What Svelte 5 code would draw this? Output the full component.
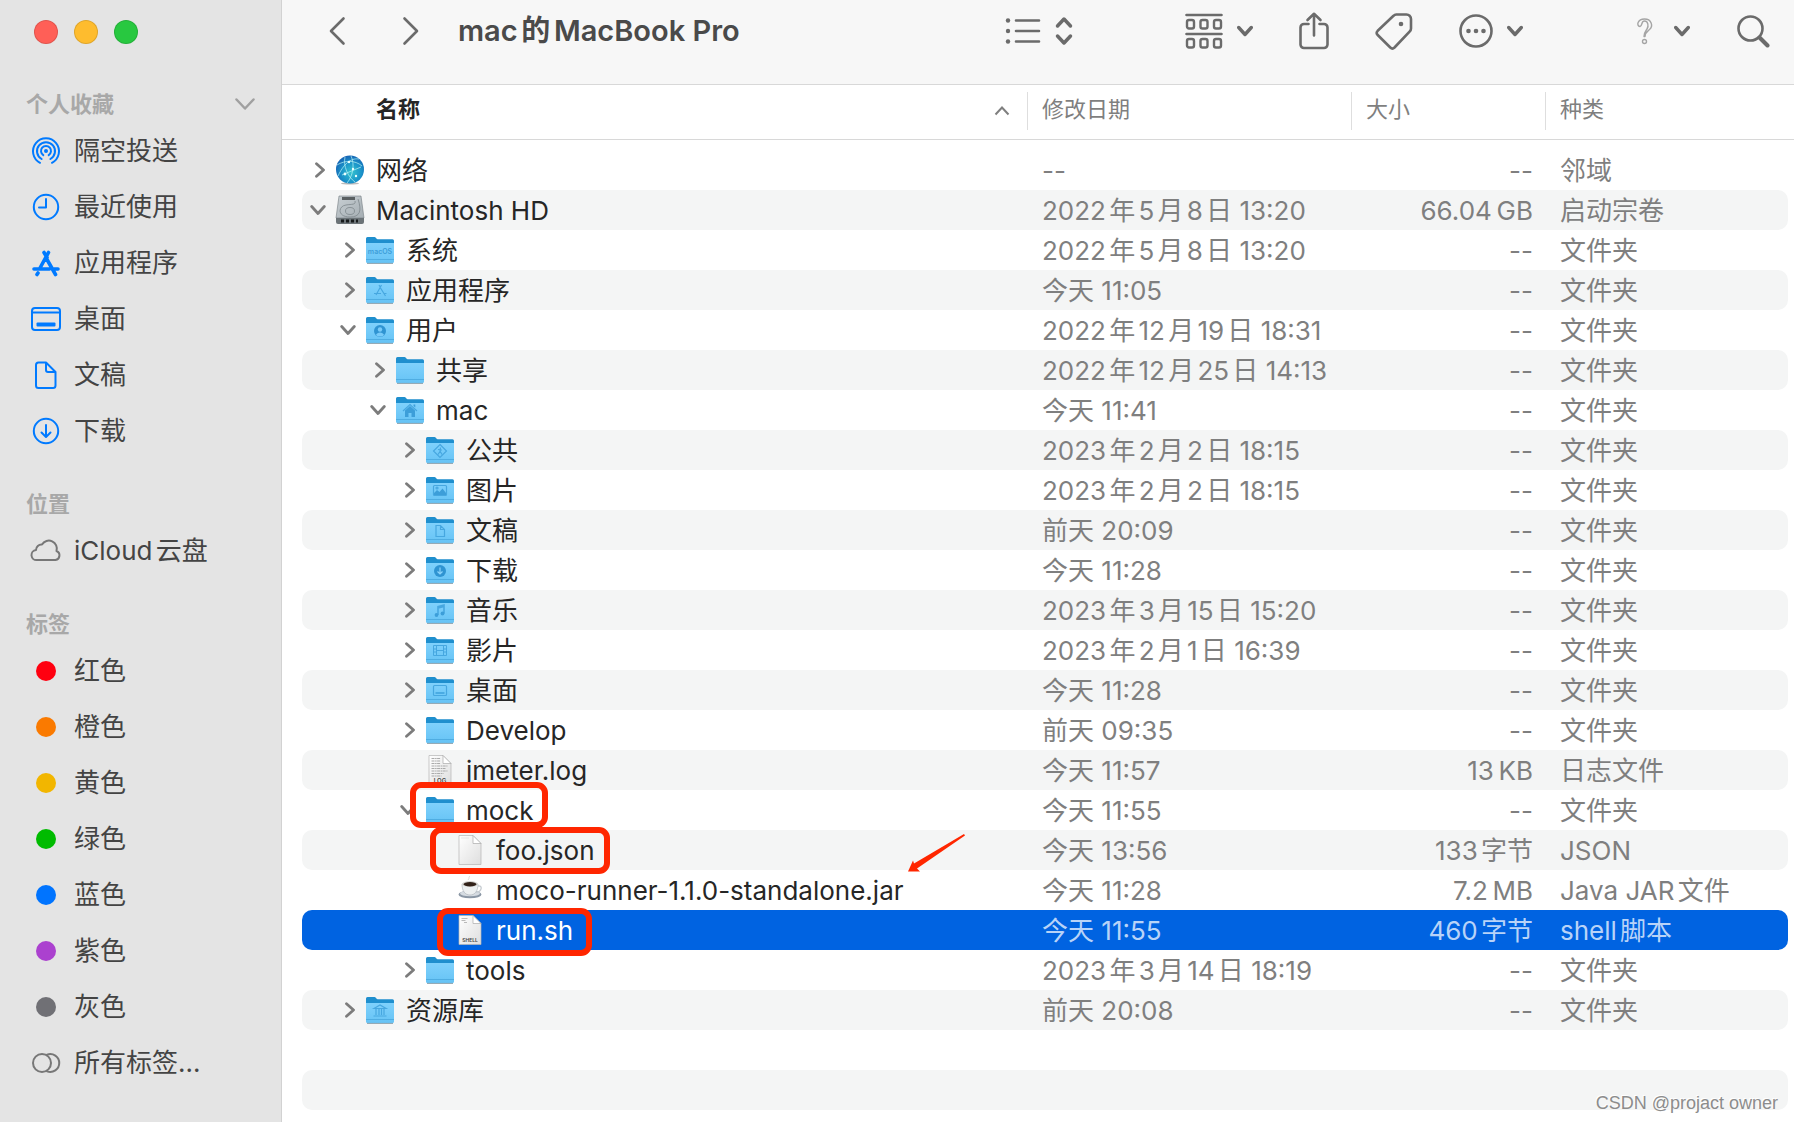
<script>
  const places = [
    { name: '隔空投送', icon: 'airdrop' },
    { name: '最近使用', icon: 'clock' },
    { name: '应用程序', icon: 'apps' },
    { name: '桌面', icon: 'desktop' },
    { name: '文稿', icon: 'doc' },
    { name: '下载', icon: 'download' },
  ];

  const tags = [
    { name: '红色', color: '#ff0010' },
    { name: '橙色', color: '#fa7a00' },
    { name: '黄色', color: '#f2b600' },
    { name: '绿色', color: '#00bb00' },
    { name: '蓝色', color: '#0074ff' },
    { name: '紫色', color: '#ab41cf' },
    { name: '灰色', color: '#707075' },
  ];

  const files = [
    { name: '网络', level: 0, icon: 'globe', date: '--', size: '--', kind: '邻域' },
    { name: 'Macintosh HD', level: 0, open: true, icon: 'disk', date: '2022年5月8日 13:20', size: '66.04\u2009GB', kind: '启动宗卷' },
    { name: '系统', level: 1, glyph: 'macos', date: '2022年5月8日 13:20' },
    { name: '应用程序', level: 1, glyph: 'apps', date: '今天 11:05' },
    { name: '用户', level: 1, open: true, glyph: 'user', date: '2022年12月19日 18:31' },
    { name: '共享', level: 2, date: '2022年12月25日 14:13' },
    { name: 'mac', level: 2, open: true, glyph: 'home', date: '今天 11:41' },
    { name: '公共', level: 3, glyph: 'public', date: '2023年2月2日 18:15' },
    { name: '图片', level: 3, glyph: 'picture', date: '2023年2月2日 18:15' },
    { name: '文稿', level: 3, glyph: 'doc', date: '前天 20:09' },
    { name: '下载', level: 3, glyph: 'download', date: '今天 11:28' },
    { name: '音乐', level: 3, glyph: 'music', date: '2023年3月15日 15:20' },
    { name: '影片', level: 3, glyph: 'movie', date: '2023年2月1日 16:39' },
    { name: '桌面', level: 3, glyph: 'desktop', date: '今天 11:28' },
    { name: 'Develop', level: 3, date: '前天 09:35' },
    { name: 'jmeter.log', level: 3, leaf: true, icon: 'log', date: '今天 11:57', size: '13\u2009KB', kind: '日志文件' },
    { name: 'mock', level: 3, open: true, date: '今天 11:55', mark: 'mark-mock' },
    { name: 'foo.json', level: 4, leaf: true, icon: 'file', date: '今天 13:56', size: '133字节', kind: 'JSON', mark: 'mark-foo' },
    { name: 'moco-runner-1.1.0-standalone.jar', level: 4, leaf: true, icon: 'jar', date: '今天 11:28', size: '7.2\u2009MB', kind: 'Java JAR文件', arrow: true },
    { name: 'run.sh', level: 4, leaf: true, icon: 'shell', date: '今天 11:55', size: '460字节', kind: 'shell脚本', mark: 'mark-run' },
    { name: 'tools', level: 3, date: '2023年3月14日 18:19' },
    { name: '资源库', level: 1, glyph: 'library', date: '前天 20:08' },
  ];

  let selected = $state('run.sh');
</script>

{#snippet chevron(dir)}
  <svg class="chevron {dir}" width="16" height="16" viewBox="0 0 16 16"><path d="M1.700 4.500L8 11.500l6.300-7" /></svg>
{/snippet}

{#snippet sideIcon(icon)}
  <svg class="side-icon" width="32" height="32" viewBox="0 0 32 32">
    {#if icon === 'airdrop'}
      <circle cx="16" cy="16" r="2" fill="currentColor" stroke="none" />
      <path d="M13.3 20.2a5 5 0 1 1 5.4 0M11.6 24a9 9 0 1 1 8.8 0M10 27.8a13 13 0 1 1 12 0" />
    {:else if icon === 'clock'}
      <circle cx="16" cy="16" r="12.2" />
      <path d="M16 8v8.6H9" />
    {:else if icon === 'apps'}
      <g stroke-width="3.6"><path d="M14 5.5l3 5M18.5 5.5L10 21M17 12.5l8.5 15M4 22h15.500M24 22h4M8 26l-1 1.5" /></g>
    {:else if icon === 'desktop'}
      <rect x="2" y="5" width="28" height="22" rx="3" />
      <path d="M2 9.600h28" />
      <rect x="6.500" y="19.500" width="19" height="4" rx="1" fill="currentColor" stroke="none" />
    {:else if icon === 'doc'}
      <path d="M8.500 3.500H16l9.500 9.500v13.500a2.500 2.500 0 0 1-2.500 2.500H8.500A2.500 2.500 0 0 1 6 26.500V6a2.500 2.500 0 0 1 2.500-2.500zM16 4v7a2 2 0 0 0 2 2h7" />
    {:else if icon === 'download'}
      <circle cx="16" cy="16" r="12.200" />
      <path d="M16 10v11.500M11.500 17.500l4.500 4.500 4.500-4.500" />
    {:else if icon === 'cloud'}
      <path d="M7 25a5 5 0 0 1-1-10 5.500 5.500 0 0 1 6-5.500 8 8 0 0 1 14.500 6.500A4.700 4.700 0 0 1 25.500 25z" />
    {:else if icon === 'tags'}
      <circle cx="12" cy="16" r="9" />
      <path d="M17 7.600a9 9 0 1 1 0 16.800" />
    {/if}
  </svg>
{/snippet}

{#snippet folder(glyph)}
  <svg class="file-icon" width="30" height="30" viewBox="0 0 30 30">
    <path d="M1 3.500A1.500 1.500 0 0 1 2.500 2h7c1.200 0 1.800 2.200 3 2.200h15A1.500 1.500 0 0 1 29 5.700V14H1z" fill="#1f8fce" />
    <path d="M1 8h28v18.500a1.500 1.500 0 0 1-1.500 1.500h-25A1.500 1.500 0 0 1 1 26.500z" fill="url(#folder-front)" />
    <path d="M1 24.500h28" stroke="#4fade2" stroke-width="1" />
    <path d="M2 28.400h26" stroke="#8aa2ae" stroke-width="1" />
    <g fill="none" stroke="#46a7e0" stroke-width="1.200">
      {#if glyph === 'macos'}
        <text x="15" y="18.500" class="tiny macos">macOS</text>
      {:else if glyph === 'apps'}
        <path d="M14 10l1.500 2.500M16.500 10L11 20M15.500 13l5 8M9 18.500h7M18.500 18.500h3" />
      {:else if glyph === 'user'}
        <circle cx="15" cy="16" r="6" fill="#2f94d2" stroke="none" />
        <circle cx="15" cy="14.500" r="2.200" fill="#79cbf9" stroke="none" />
        <path d="M11 20c1-3.500 7-3.500 8 0-2 2-6 2-8 0z" fill="#79cbf9" stroke="none" />
      {:else if glyph === 'home'}
        <path d="M8 16l7-6.500 7 6.500" />
        <path d="M10 15.500l5-4.500 5 4.500V22h-3.500v-4h-3v4H10zM18.500 9.500h1.800v3l-1.800-1.500z" fill="#3c9ed9" stroke="none" />
      {:else if glyph === 'public'}
        <path d="M15 9.500l6.500 6.500-6.500 6.500L8.500 16z" />
        <path d="M15.500 12.500l-.5 4-2 3M15 16l2 3.500M13 14.500l4 .5" />
      {:else if glyph === 'picture'}
        <rect x="8.500" y="10.500" width="13" height="10" rx="1" />
        <path d="M9 20v-2l3-3 2.500 2 3-3.500L21 18v2z" fill="#3c9ed9" stroke="none" />
        <circle cx="12" cy="13" r="1" />
      {:else if glyph === 'doc'}
        <path d="M11 10.500h4.500l4 4V21.500H11zM15.500 10.500v4h4" />
      {:else if glyph === 'download'}
        <circle cx="15" cy="16" r="6" fill="#2f94d2" stroke="none" />
        <path d="M15 12.500v6.500M12.500 16.500l2.500 2.500 2.500-2.500" stroke="#8bd3fb" />
      {:else if glyph === 'music'}
        <path d="M13 20v-8.500l6-1.500v8.500M13 13l6-1.500" stroke-width="1.600" />
        <circle cx="11.500" cy="20" r="1.900" fill="#3c9ed9" stroke="none" />
        <circle cx="17.500" cy="18.500" r="1.900" fill="#3c9ed9" stroke="none" />
      {:else if glyph === 'movie'}
        <path d="M8.500 10.500h13v10h-13zM11.500 10.500v10M18.500 10.500v10M11.500 15.500h7M8.500 14h3M8.500 17h3M18.500 14h3M18.500 17h3" stroke-width="1" />
      {:else if glyph === 'desktop'}
        <rect x="8.500" y="10.500" width="13" height="10" rx="1" />
        <path d="M10.500 18h9" stroke-width="1.800" />
      {:else if glyph === 'library'}
        <path d="M9 13.500l6-3.500 6 3.500zM11 14v6M14 14v6M16.500 14v6M19 14v6M8.500 21h13" />
      {/if}
    </g>
  </svg>
{/snippet}

{#snippet paper(kind)}
  <svg class="file-icon" width="30" height="30" viewBox="0 0 30 30">
    <path d="M4 .5h14l8 8v21H4z" fill="url(#paper)" stroke="#b4b4b4" stroke-width=".7" />
    <path d="M18 .5v8h8z" fill="#fff" stroke="#aaa" stroke-width=".7" />
    {#if kind === 'log'}
      <path d="M6.500 3.500h9M6.500 6h9M6.500 8.500h9M6.500 11h16M6.500 13.500h14M6.500 16h16M6.500 18.500h12M6.500 21h10" stroke="#aaa" stroke-width="1.100" stroke-dasharray="3 .6 1.500 .5" />
      <text x="15" y="27.500" class="tiny log">LOG</text>
    {:else if kind === 'shell'}
      <path d="M6.500 3.500h6M6.500 5.500h4M9 7.500h3" stroke="#aaa" stroke-width=".8" />
      <text x="15" y="26.500" class="tiny shell">SHELL</text>
    {:else}
      <path d="M6 3h8" stroke="#ddd" stroke-width=".7" />
    {/if}
  </svg>
{/snippet}

<svg class="defs" width="0" height="0" aria-hidden="true">
  <defs>
    <linearGradient id="folder-front" x2="0" y2="1">
      <stop offset="0" stop-color="#7fd1fc" />
      <stop offset="1" stop-color="#66c3f5" />
    </linearGradient>
    <linearGradient id="paper" x2="1" y2="1">
      <stop offset="0" stop-color="#fff" />
      <stop offset="1" stop-color="#dedede" />
    </linearGradient>
    <radialGradient id="globe" cx=".55" cy=".6" r=".6">
      <stop offset="0" stop-color="#35c3cf" />
      <stop offset=".6" stop-color="#1a93c9" />
      <stop offset="1" stop-color="#1665b5" />
    </radialGradient>
    <linearGradient id="disk" x2="1" y2="1">
      <stop offset="0" stop-color="#c9d0d4" />
      <stop offset="1" stop-color="#a4adb2" />
    </linearGradient>
  </defs>
</svg>

<div class="window">
  <aside>
    <div class="lights">
      <button class="red" aria-label="关闭"></button>
      <button class="yellow" aria-label="最小化"></button>
      <button class="green" aria-label="缩放"></button>
    </div>

    <h2>个人收藏 <button aria-label="折叠">
      <svg width="20" height="12" viewBox="0 0 20 12"><path d="M1.500 1.500L10 10.500l8.500-9" /></svg>
    </button></h2>
    <nav>
      {#each places as place (place.name)}
        <a href="#top" class="blue">{@render sideIcon(place.icon)}<span>{place.name}</span></a>
      {/each}
    </nav>

    <h2>位置</h2>
    <nav>
      <a href="#top">{@render sideIcon('cloud')}<span>iCloud云盘</span></a>
    </nav>

    <h2>标签</h2>
    <nav>
      {#each tags as tag (tag.name)}
        <a href="#top"><i class="dot" style:background={tag.color}></i><span>{tag.name}</span></a>
      {/each}
      <a href="#top">{@render sideIcon('tags')}<span>所有标签...</span></a>
    </nav>
  </aside>

  <main>
    <header>
      <button aria-label="后退">
        <svg width="18" height="30" viewBox="0 0 18 30"><path d="M15.500 2.500L3 15l12.500 12.500" /></svg>
      </button>
      <button class="forward" aria-label="前进">
        <svg width="18" height="30" viewBox="0 0 18 30"><path d="M2.500 2.500L15 15 2.500 27.500" /></svg>
      </button>
      <h1>mac的MacBook Pro</h1>

      <button class="view" aria-label="列表显示">
        <svg width="36" height="28" viewBox="0 0 36 28">
          <path d="M11 3.500h23M11 14h23M11 24.500h23" />
          <g fill="currentColor" stroke="none"><circle cx="3" cy="3.500" r="2.200" /><circle cx="3" cy="14" r="2.200" /><circle cx="3" cy="24.500" r="2.200" /></g>
        </svg>
        <svg width="18" height="30" viewBox="0 0 18 30"><path class="bold" d="M2.500 10L9 3l6.500 7M2.500 20L9 27l6.500-7" /></svg>
      </button>
      <button class="group" aria-label="分组">
        <svg width="38" height="36" viewBox="0 0 38 36">
          <path d="M1.500 2h35M1.500 21h35" />
          <g stroke-width="2.400">
            <rect x="2" y="7" width="7" height="8.500" rx="2" /><rect x="15.500" y="7" width="7" height="8.500" rx="2" /><rect x="29" y="7" width="7" height="8.500" rx="2" />
            <rect x="2" y="26" width="7" height="8.500" rx="2" /><rect x="15.500" y="26" width="7" height="8.500" rx="2" /><rect x="29" y="26" width="7" height="8.500" rx="2" />
          </g>
        </svg>
        {@render chevron('down')}
      </button>
      <button aria-label="共享">
        <svg width="30" height="38" viewBox="0 0 30 38"><path d="M9.500 12H5a3.500 3.500 0 0 0-3.500 3.500v17A3.500 3.500 0 0 0 5 36h20a3.500 3.500 0 0 0 3.500-3.500v-17A3.500 3.500 0 0 0 25 12h-4.500M15 23.500V2M8.500 8L15 1.800 21.500 8" /></svg>
      </button>
      <button aria-label="标签">
        <svg width="38" height="38" viewBox="0 0 38 38">
          <path d="M18.500 3.800a4 4 0 0 1 2.800-1.300h10A4.500 4.500 0 0 1 36 7v9.500a4 4 0 0 1-1.200 2.800L19.500 35.500a3 3 0 0 1-4.200 0L2.700 23a3 3 0 0 1 0-4.200z" />
          <circle cx="26" cy="12" r="2.300" fill="currentColor" stroke="none" />
        </svg>
      </button>
      <button class="more" aria-label="更多">
        <svg width="34" height="34" viewBox="0 0 34 34">
          <circle cx="17" cy="17" r="15.500" />
          <g fill="currentColor" stroke="none"><circle cx="9.500" cy="17" r="2.300" /><circle cx="17" cy="17" r="2.300" /><circle cx="24.500" cy="17" r="2.300" /></g>
        </svg>
        {@render chevron('down')}
      </button>
      <button class="help" aria-label="帮助">
        <svg width="18" height="28" viewBox="0 0 18 28">
          <path d="M4 9.500C0 9 1.500 2 8.500 2s9 7 5 10.500C10.500 15 9 16 9 19.500M4 9.500c2.500-.5 1-5.500 4.500-5.500s4.500 5 2.500 8-3 4-3 7.500" />
          <circle cx="8.500" cy="24.500" r="2" />
        </svg>
        {@render chevron('down')}
      </button>
      <button aria-label="搜索">
        <svg width="34" height="34" viewBox="0 0 34 34"><circle cx="14.500" cy="14.500" r="12" /><path class="thick" d="M23.500 23.500l8 8" /></svg>
      </button>
    </header>

    <table>
      <thead>
        <tr>
          <th class="name"><button>名称</button>
            <svg width="16" height="10" viewBox="0 0 16 10"><path d="M1.500 8.500L8 1.500l6.500 7" /></svg>
          </th>
          <th><button>修改日期</button></th>
          <th><button>大小</button></th>
          <th><button>种类</button></th>
        </tr>
      </thead>
      <tbody>
        {#each files as file}
          <tr class:selected={selected === file.name} onclick={() => (selected = file.name)}>
            <td class="name" style:padding-left={`${file.level * 30 + 5}px`}>
              {#if file.leaf}
                <span class="toggle"></span>
              {:else}
                <button class="toggle" class:open={file.open} aria-label="展开">
                  {@render chevron(file.open ? 'down' : 'right')}
                </button>
              {/if}
              {#if file.icon === 'globe'}
                <svg class="file-icon" width="30" height="30" viewBox="0 0 30 30">
                  <ellipse cx="15" cy="28.500" rx="9" ry="1" fill="#bbb" />
                  <circle cx="15" cy="14.500" r="14" fill="url(#globe)" />
                  <g fill="none" stroke="#b9f4f5" stroke-width=".7">
                    <path d="M2 10c8-5 18-5 25 1M3 21C10 6 18 3 24 4M10 2c-2 9 3 20 10 25M16 1c4 8 2 20-4 27M7 20l19-8" />
                  </g>
                  <g fill="#eaffff"><circle cx="14" cy="7" r="1.200" /><circle cx="18" cy="14" r="1.200" /><circle cx="10" cy="19" r="1.400" /><circle cx="21" cy="21" r="1.200" /></g>
                </svg>
              {:else if file.icon === 'disk'}
                <svg class="file-icon" width="30" height="30" viewBox="0 0 30 30">
                  <path d="M4 1h22l3 22H1z" fill="url(#disk)" stroke="#727b80" stroke-width=".6" />
                  <path d="M1 23h28v4a2 2 0 0 1-2 2H3a2 2 0 0 1-2-2z" fill="#6b7377" />
                  <path d="M7 2h13v3H7z" fill="#5a6062" />
                  <path d="M6 26h3M11 26h3M16 26h3M21 26h2" stroke="#15191a" stroke-width="3" />
                  <g fill="none" stroke="#7d878c" stroke-width=".8"><ellipse cx="15" cy="16" rx="4.500" ry="3.500" /><path d="M23 4c4 12 2 18-8 18-13 0-12-11-4-12 6-1 10 0 9-4" /></g>
                </svg>
              {:else if file.icon === 'jar'}
                <svg class="file-icon" width="30" height="30" viewBox="0 0 30 30">
                  <ellipse cx="15" cy="19.500" rx="11.500" ry="3.800" fill="#8b97a5" />
                  <ellipse cx="15" cy="18.500" rx="10" ry="2.800" fill="#d6dce2" />
                  <path d="M23 11c5-1 4 6-2 6" fill="none" stroke="#c5cbd0" stroke-width="1.300" />
                  <path d="M7 9h16c0 7-3 11-8 11S7 16 7 9z" fill="#edf0f1" stroke="#a7afb5" stroke-width=".6" />
                  <ellipse cx="15" cy="9" rx="8" ry="3" fill="#d5d5d2" />
                  <ellipse cx="15" cy="9.300" rx="6.500" ry="2.200" fill="#33221a" />
                  <path d="M13 5c2-2 0-3 2-4" fill="none" stroke="#ddd" />
                </svg>
              {:else if file.icon}
                {@render paper(file.icon)}
              {:else}
                {@render folder(file.glyph)}
              {/if}
              <span class="label">{file.name}</span>
              {#if file.mark}<i class="mark {file.mark}"></i>{/if}
              {#if file.arrow}
                <svg class="arrow" width="58" height="40" viewBox="0 0 58 40"><path d="M57 1.500L56 0 6 29.500 5 26.500 0 37.500h12L9 34.500z" /></svg>
              {/if}
            </td>
            <td>{file.date}</td>
            <td class="size">{file.size ?? '--'}</td>
            <td>{file.kind ?? '文件夹'}</td>
          </tr>
        {/each}
        <tr><td></td></tr>
        <tr><td></td></tr>
      </tbody>
    </table>
    <div class="watermark">CSDN @projact owner</div>
  </main>
</div>

<style>
  :global(body) {
    margin: 0;
    background: #fff;
  }

  .window {
    display: flex;
    min-height: 100vh;
    font-family: Inter, "Noto Sans CJK SC", sans-serif;
    font-size: 26px;
    line-height: 40px;
    color: #262626;
    text-autospace: normal;
  }

  .defs {
    position: absolute;
  }

  button {
    display: flex;
    align-items: center;
    padding: 0;
    border: 0;
    background: none;
    color: inherit;
    font: inherit;
  }

  svg {
    flex: none;
    display: block;
  }

  /* sidebar */
  aside {
    flex: none;
    box-sizing: border-box;
    width: 282px;
    background: #e4e4e4;
    border-right: 1px solid #d2d2d2;
  }

  .lights {
    display: flex;
    gap: 16px;
    box-sizing: border-box;
    height: 59px;
    padding: 20px 0 0 34px;
  }

  .lights button {
    box-sizing: border-box;
    width: 24px;
    height: 24px;
    border-radius: 50%;
    border: 1px solid rgba(0, 0, 0, 0.12);
  }

  .red {
    background: #ff5f57;
  }

  .yellow {
    background: #febc2e;
  }

  .green {
    background: #28c840;
  }

  h2 {
    display: flex;
    align-items: center;
    justify-content: space-between;
    height: 38px;
    margin: 26px 26px 0 26px;
    font-size: 22px;
    font-weight: 700;
    color: #a8a8a8;
  }

  h2 svg {
    fill: none;
    stroke: #a0a0a0;
    stroke-width: 2.5;
    stroke-linecap: round;
    stroke-linejoin: round;
  }

  nav a {
    display: flex;
    align-items: center;
    gap: 12px;
    height: 56px;
    padding-left: 30px;
    color: #444;
    text-decoration: none;
  }

  .side-icon {
    fill: none;
    stroke: currentColor;
    stroke-width: 2;
    stroke-linecap: round;
    stroke-linejoin: round;
    color: #777;
  }

  .blue .side-icon {
    color: #007aff;
  }

  .dot {
    width: 20px;
    height: 20px;
    margin: 0 6px;
    border-radius: 50%;
  }

  /* toolbar */
  main {
    position: relative;
    flex: 1;
    min-width: 0;
  }

  header {
    display: flex;
    align-items: center;
    gap: 46px;
    box-sizing: border-box;
    height: 85px;
    padding: 0 24px 22px 46px;
    background: #f7f7f7;
    border-bottom: 1px solid #d8d8d8;
    color: #6b6b6b;
  }

  header svg {
    fill: none;
    stroke: currentColor;
    stroke-width: 2.6;
    stroke-linecap: round;
    stroke-linejoin: round;
  }

  header .bold {
    stroke-width: 3.5;
  }

  header .thick {
    stroke-width: 4;
  }

  .forward {
    margin-left: 10px;
  }

  h1 {
    flex: 1;
    margin: 0 0 0 -8px;
    font-size: 29px;
    font-weight: 600;
    color: #4a4a4a;
    white-space: nowrap;
  }

  .view,
  .group,
  .more {
    gap: 14px;
  }

  .view {
    margin-right: 66px;
  }

  .help {
    gap: 20px;
    margin-left: 67px;
  }

  .help svg:first-child {
    stroke: #a5a5a5;
    stroke-width: 1.4;
  }

  .chevron {
    fill: none;
    stroke: currentColor;
    stroke-width: 2.8;
    stroke-linecap: round;
    stroke-linejoin: round;
  }

  header .chevron {
    stroke-width: 3.4;
  }

  .chevron.right {
    transform: rotate(-90deg);
  }

  /* file list */
  table,
  thead,
  tbody {
    display: block;
  }

  tr {
    display: grid;
    grid-template-columns: 1fr 324px 194px 243px;
  }

  thead tr {
    box-sizing: border-box;
    height: 55px;
    padding: 7px 6px 0 20px;
    border-bottom: 1px solid #d8d8d8;
  }

  th {
    display: flex;
    align-items: flex-start;
    height: 38px;
    padding: 0 0 0 14px;
    border-left: 1px solid #dedede;
    font-size: 22px;
    font-weight: 400;
    line-height: 35px;
    color: #7f7f7f;
  }

  th.name {
    justify-content: space-between;
    padding: 0 17px 0 74px;
    border: 0;
    font-weight: 600;
    color: #262626;
  }

  th svg {
    margin-top: 14px;
    fill: none;
    stroke: #7f7f7f;
    stroke-width: 2;
  }

  tbody {
    padding: 10px 6px 0 20px;
  }

  tbody tr {
    grid-template-rows: 40px;
    border-radius: 10px;
  }

  tbody tr:nth-child(even) {
    background: #f4f5f5;
  }

  tbody tr.selected {
    background: #0063e1;
  }

  td {
    padding: 0 0 0 15px;
    line-height: 42px;
    color: #7f7f7f;
    white-space: nowrap;
  }

  td.name {
    position: relative;
    display: flex;
    align-items: center;
    color: #262626;
  }

  td.size {
    padding-right: 12px;
    text-align: right;
  }

  .selected td {
    color: #b8d3f8;
  }

  .selected td.name {
    color: #fff;
  }

  .toggle {
    box-sizing: border-box;
    width: 28px;
    height: 40px;
    justify-content: center;
    padding-right: 2px;
    color: #7c7c7c;
  }

  .toggle.open {
    padding-right: 6px;
  }

  .label {
    padding-top: 2px;
    margin-left: 11px;
  }

  .tiny {
    font-family: Inter, sans-serif;
    font-weight: 600;
    text-anchor: middle;
    stroke: none;
  }

  .macos {
    font-size: 7px;
    fill: #3c9ed9;
  }

  .log {
    font-size: 6px;
    fill: #444;
  }

  .shell {
    font-size: 5px;
    fill: #444;
  }

  /* red annotations over the rows */
  .mark {
    position: absolute;
    z-index: 1;
    box-sizing: border-box;
    border: 6px solid #ff2600;
    border-radius: 11px;
    pointer-events: none;
  }

  .mark-mock {
    left: 108px;
    top: -8px;
    width: 138px;
    height: 46px;
  }

  .mark-foo {
    left: 128px;
    top: -3px;
    width: 180px;
    height: 47px;
  }

  .mark-run {
    left: 135px;
    top: -2px;
    width: 155px;
    height: 48px;
  }

  .arrow {
    position: absolute;
    z-index: 1;
    left: 606px;
    top: -36px;
    fill: #ff2600;
  }

  .watermark {
    position: absolute;
    right: 16px;
    bottom: 8px;
    font: 18px/22px "Liberation Sans", sans-serif;
    color: #8c8c8c;
    text-shadow: -1px -1px 0 #fff;
  }
</style>
